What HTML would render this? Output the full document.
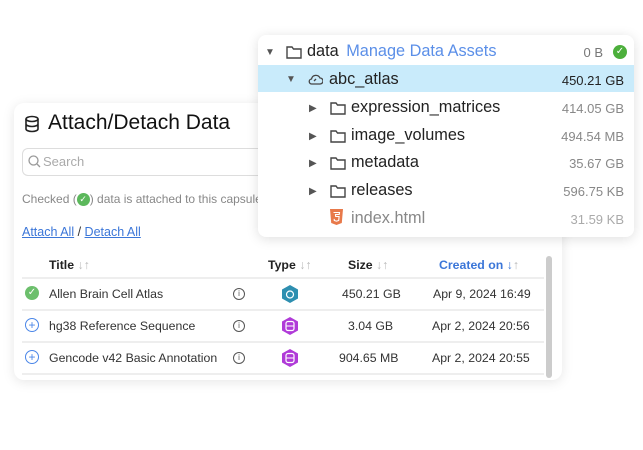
<!DOCTYPE html><html><head><style>
body{margin:0;width:643px;height:450px;background:#fff;font-family:"Liberation Sans",sans-serif;position:relative;overflow:hidden}
.a{position:absolute;white-space:nowrap}
.back{position:absolute;left:14px;top:103px;width:548px;height:277px;background:#fff;border-radius:10px;box-shadow:0 2px 12px rgba(0,0,0,.10)}
.front{position:absolute;left:258px;top:35px;width:376px;height:202px;background:#fff;border-radius:8px;box-shadow:0 2px 12px rgba(0,0,0,.13)}
.hl{position:absolute;left:0;top:30px;width:376px;height:27px;background:#c9ebfb}
.tree{font-size:16.3px;color:#222}
.sz{font-size:13px;color:#888;text-align:right;width:100px}
.tri{font-size:10px;color:#555}
.sep{position:absolute;left:22px;width:522px;height:2px;background:#eee}
.cell{font-size:12.3px;color:#333}
</style></head><body>
<div class="back">
<svg class="a" style="left:10px;top:12px" width="16" height="18" viewBox="0 0 16 18" fill="none" stroke="#222" stroke-width="1.6"><ellipse cx="8" cy="4" rx="6" ry="2.5"/><path d="M2 4v10c0 1.4 2.7 2.5 6 2.5s6-1.1 6-2.5V4M2 9c0 1.4 2.7 2.5 6 2.5S14 10.4 14 9"/></svg>
<div class="a" style="left:34px;top:8px;font-size:21px;color:#111">Attach/Detach Data</div>
<div class="a" style="left:8px;top:45px;width:260px;height:26px;border:1px solid #ddd;border-radius:6px;border-right:none"></div>
<svg class="a" style="left:14px;top:52px" width="13" height="13" fill="none" stroke="#999" stroke-width="1.3"><circle cx="5.5" cy="5.5" r="4.5"/><path d="M9 9l3 3"/></svg>
<div class="a" style="left:29px;top:51px;font-size:13px;color:#aaa">Search</div>
<div class="a" style="left:8px;top:89px;font-size:12px;color:#888;display:flex;align-items:center">Checked (<span style="display:inline-block;width:13px;height:13px;border-radius:50%;background:#5cb85c;color:#fff;font-size:9px;text-align:center;line-height:13px">✓</span>) data is attached to this capsule</div>
<div class="a" style="left:8px;top:122px;font-size:12.5px;color:#333"><u style="color:#3b76d8">Attach All</u> / <u style="color:#3b76d8">Detach All</u></div>
<div class="a cell" style="left:35px;top:155px;font-weight:bold;color:#222">Title <span style="color:#bbb;font-weight:normal">↓↑</span></div>
<div class="a cell" style="left:254px;top:155px;font-weight:bold;color:#222">Type <span style="color:#bbb;font-weight:normal">↓↑</span></div>
<div class="a cell" style="left:334px;top:155px;font-weight:bold;color:#222">Size <span style="color:#bbb;font-weight:normal">↓↑</span></div>
<div class="a cell" style="left:425px;top:155px;font-weight:bold;color:#3b76d8">Created on <span>↓</span><span style="color:#bbb;font-weight:normal">↑</span></div>
</div>
<div class="sep" style="top:277px"></div><div class="sep" style="top:309px"></div><div class="sep" style="top:341px"></div><div class="sep" style="top:373px"></div>
<div class="a" style="left:546px;top:256px;width:6px;height:122px;background:#ccc;border-radius:3px"></div>
<div class="a" style="left:25px;top:286px;width:14px;height:14px;border-radius:50%;background:#6cbf6c;color:#fff;font-size:10px;text-align:center;line-height:14px">✓</div>
<div class="a" style="left:25px;top:318px;width:12px;height:12px;border-radius:50%;border:1px solid #4a86e8;color:#4a86e8;font-size:12px;text-align:center;line-height:12px">+</div>
<div class="a" style="left:25px;top:350px;width:12px;height:12px;border-radius:50%;border:1px solid #4a86e8;color:#4a86e8;font-size:12px;text-align:center;line-height:12px">+</div>
<div class="a cell" style="left:49px;top:287px">Allen Brain Cell Atlas</div>
<div class="a cell" style="left:49px;top:319px">hg38 Reference Sequence</div>
<div class="a cell" style="left:49px;top:351px">Gencode v42 Basic Annotation</div>
<div class="a" style="left:233px;top:288px;width:10px;height:10px;border:1px solid #555;border-radius:50%;font-size:8px;text-align:center;line-height:10px;color:#555">i</div>
<div class="a" style="left:233px;top:320px;width:10px;height:10px;border:1px solid #555;border-radius:50%;font-size:8px;text-align:center;line-height:10px;color:#555">i</div>
<div class="a" style="left:233px;top:352px;width:10px;height:10px;border:1px solid #555;border-radius:50%;font-size:8px;text-align:center;line-height:10px;color:#555">i</div>
<svg class="a" style="left:282px;top:285px" width="16" height="18"><polygon points="8,0 16,4.5 16,13.5 8,18 0,13.5 0,4.5" fill="#2e8fb0"/><circle cx="8" cy="9.5" r="3.5" fill="none" stroke="#fff" stroke-width="1.2"/></svg>
<svg class="a" style="left:282px;top:317px" width="16" height="18"><polygon points="8,0 16,4.5 16,13.5 8,18 0,13.5 0,4.5" fill="#b03ad8"/><rect x="4" y="4.5" width="8" height="9" rx="2" fill="none" stroke="#fff" stroke-width="1.2"/><path d="M4 9h8" stroke="#fff"/></svg>
<svg class="a" style="left:282px;top:349px" width="16" height="18"><polygon points="8,0 16,4.5 16,13.5 8,18 0,13.5 0,4.5" fill="#b03ad8"/><rect x="4" y="4.5" width="8" height="9" rx="2" fill="none" stroke="#fff" stroke-width="1.2"/><path d="M4 9h8" stroke="#fff"/></svg>
<div class="a cell" style="left:342px;top:287px">450.21 GB</div>
<div class="a cell" style="left:348px;top:319px">3.04 GB</div>
<div class="a cell" style="left:339px;top:351px">904.65 MB</div>
<div class="a cell" style="left:433px;top:287px">Apr 9, 2024 16:49</div>
<div class="a cell" style="left:432px;top:319px">Apr 2, 2024 20:56</div>
<div class="a cell" style="left:432px;top:351px">Apr 2, 2024 20:55</div>

<div class="front">
<div class="hl"></div>
<div class="a tri" style="left:7px;top:12px">▼</div>
<svg class="a" style="left:28px;top:10px" width="16" height="14" fill="none" stroke="#444" stroke-width="1.4"><path d="M1 2h5l1.5 2H15v9H1z"/></svg>
<div class="a tree" style="left:49px;top:7px;font-size:16.3px">data <span style="color:#5b8fe8;margin-left:3px">Manage Data Assets</span></div>
<div class="a sz" style="left:245px;top:10px;color:#777">0 B</div>
<div class="a" style="left:355px;top:10px;width:14px;height:14px;border-radius:50%;background:#4caf3c;color:#fff;font-size:10px;text-align:center;line-height:14px">✓</div>
<div class="a tri" style="left:28px;top:39px">▼</div>
<svg class="a" style="left:50px;top:38px" width="15" height="12" fill="none" stroke="#444" stroke-width="1.3"><path d="M4 11h8a3 3 0 0 0 0-6A4.5 4.5 0 0 0 3.5 6 2.5 2.5 0 0 0 4 11z"/><path d="M6 8l2-2"/></svg>
<div class="a tree" style="left:71px;top:35px">abc_atlas</div>
<div class="a sz" style="left:266px;top:38px;color:#222">450.21 GB</div>
<div class="a tri" style="left:51px;top:68px">▶</div><svg class="a" style="left:72px;top:66px" width="16" height="14" fill="none" stroke="#444" stroke-width="1.4"><path d="M1 2h5l1.5 2H15v9H1z"/></svg><div class="a tree" style="left:93px;top:63px">expression_matrices</div><div class="a sz" style="left:266px;top:66px">414.05 GB</div>
<div class="a tri" style="left:51px;top:96px">▶</div><svg class="a" style="left:72px;top:94px" width="16" height="14" fill="none" stroke="#444" stroke-width="1.4"><path d="M1 2h5l1.5 2H15v9H1z"/></svg><div class="a tree" style="left:93px;top:91px">image_volumes</div><div class="a sz" style="left:266px;top:94px">494.54 MB</div>
<div class="a tri" style="left:51px;top:123px">▶</div><svg class="a" style="left:72px;top:121px" width="16" height="14" fill="none" stroke="#444" stroke-width="1.4"><path d="M1 2h5l1.5 2H15v9H1z"/></svg><div class="a tree" style="left:93px;top:118px">metadata</div><div class="a sz" style="left:266px;top:121px">35.67 GB</div>
<div class="a tri" style="left:51px;top:151px">▶</div><svg class="a" style="left:72px;top:149px" width="16" height="14" fill="none" stroke="#444" stroke-width="1.4"><path d="M1 2h5l1.5 2H15v9H1z"/></svg><div class="a tree" style="left:93px;top:146px">releases</div><div class="a sz" style="left:266px;top:149px">596.75 KB</div>
<svg class="a" style="left:72px;top:174px" width="13" height="16"><path d="M0 0h13l-1.2 14L6.5 16 1.2 14z" fill="#e8794a"/><path d="M3.5 3.5h6l-.3 2H5.5l.2 2h3.4l-.4 4-2.2.7-2.2-.7-.1-1.6" fill="none" stroke="#fff" stroke-width="1.1"/></svg>
<div class="a tree" style="left:93px;top:174px;color:#888">index.html</div><div class="a sz" style="left:266px;top:177px;color:#aaa">31.59 KB</div>
</div>
</body></html>
